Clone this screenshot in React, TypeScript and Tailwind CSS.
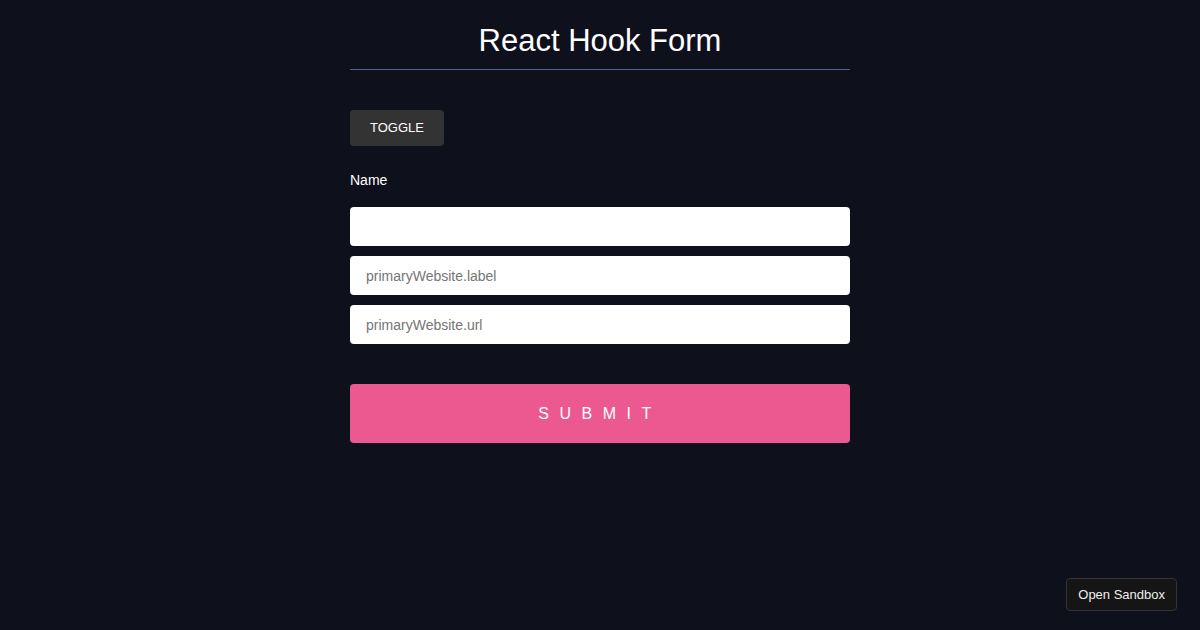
import React from 'react';

const App: React.FC = () => {
  return (
    <div className="relative min-h-[630px] w-full bg-[#0e101c] text-white font-['Liberation_Sans',Arial,sans-serif]">
      <form className="mx-auto w-[500px] flex flex-col" onSubmit={(e) => e.preventDefault()}>
        <h1 className="pt-[25px] pb-[13px] text-center text-[31px] leading-[31px] font-light border-b border-[#4f6294]">
          React Hook Form
        </h1>

        <div className="mt-[40px]">
          <button type="button" className="h-[36px] px-[20px] rounded-[4px] bg-[#333333] text-[13px] leading-4 text-white">
            TOGGLE
          </button>
        </div>

        <label className="mt-[26px] text-[14px] leading-4 text-white">Name</label>

        <div className="mt-[19px] flex flex-col gap-[10px]">
          <input className="h-[39px] w-full rounded-[4px] bg-white px-4 text-[14px] text-black outline-none" />
          <input
            placeholder="primaryWebsite.label"
            className="h-[39px] w-full rounded-[4px] bg-white px-4 text-[14px] text-black outline-none placeholder:text-[#757575]"
          />
          <input
            placeholder="primaryWebsite.url"
            className="h-[39px] w-full rounded-[4px] bg-white px-4 text-[14px] text-black outline-none placeholder:text-[#757575]"
          />
        </div>

        <button type="submit" className="mt-[40px] h-[59px] w-full rounded-[4px] bg-[#ec5990] text-[16px] tracking-[10.5px] text-white">
          SUBMIT
        </button>
      </form>

      <button className="fixed right-[23px] bottom-[19px] h-[33px] px-[11px] rounded-[4px] border border-[#333333] bg-[#151515] text-[13px] text-[#eeeeee]">
        Open Sandbox
      </button>
    </div>
  );
};

export default App;
